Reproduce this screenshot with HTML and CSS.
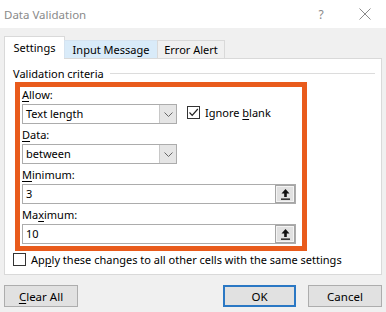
FILE: index.html
```html
<!DOCTYPE html>
<html lang="en">
<head>
  <meta charset="UTF-8" />
  <title>Data Validation</title>
  <link rel="stylesheet" href="styles.css">
</head>
<body>
  <div class="dialog">
    <div class="titlebar">
      <span class="title">Data Validation</span>
      <span class="help">?</span>
      <span class="close">
        <svg width="12" height="12" viewBox="0 0 12 12"><path d="M0.5 0.5 L11.5 11.5 M11.5 0.5 L0.5 11.5" stroke="#8a8a8a" stroke-width="1" fill="none"/></svg>
      </span>
    </div>

    <div class="tabs">
      <div class="tab active">Settings</div>
      <div class="tab hover">Input Message</div>
      <div class="tab error">Error Alert</div>
    </div>

    <div class="panel">
      <div class="group-title"><span>Validation criteria</span><span class="rule"></span></div>

      <div class="highlight">
        <label class="field-label"><u>A</u>llow:</label>
        <div class="row">
          <div class="select">
            <span class="value">Text length</span>
            <span class="drop"><svg width="9" height="5" viewBox="0 0 9 5"><path d="M0.5 0.5 L4.5 4.5 L8.5 0.5" stroke="#666" fill="none"/></svg></span>
          </div>
          <div class="check-row">
            <span class="checkbox checked"><svg width="11" height="11" viewBox="0 0 11 11"><path d="M1.5 5.5 L4.2 8.3 L9.8 2" stroke="#222" stroke-width="1.2" fill="none"/></svg></span>
            <span>Ignore <u>b</u>lank</span>
          </div>
        </div>

        <label class="field-label"><u>D</u>ata:</label>
        <div class="select">
          <span class="value">between</span>
          <span class="drop"><svg width="9" height="5" viewBox="0 0 9 5"><path d="M0.5 0.5 L4.5 4.5 L8.5 0.5" stroke="#666" fill="none"/></svg></span>
        </div>

        <label class="field-label"><u>M</u>inimum:</label>
        <div class="ref-input">
          <span class="value">3</span>
          <span class="ref-btn">
            <svg width="11" height="12" viewBox="0 0 11 12"><path d="M5.5 1 L1.5 5.5 H4.2 V9 H6.8 V5.5 H9.5 Z" fill="#111"/><rect x="1" y="10.5" width="9" height="1.3" fill="#111"/></svg>
          </span>
        </div>

        <label class="field-label">Ma<u>x</u>imum:</label>
        <div class="ref-input">
          <span class="value">10</span>
          <span class="ref-btn">
            <svg width="11" height="12" viewBox="0 0 11 12"><path d="M5.5 1 L1.5 5.5 H4.2 V9 H6.8 V5.5 H9.5 Z" fill="#111"/><rect x="1" y="10.5" width="9" height="1.3" fill="#111"/></svg>
          </span>
        </div>
      </div>

      <div class="check-row apply">
        <span class="checkbox"></span>
        <span>Ap<u>p</u>ly these changes to all other cells with the same settings</span>
      </div>
    </div>

    <div class="buttons">
      <button class="btn"><u>C</u>lear All</button>
      <div class="right">
        <button class="btn default">OK</button>
        <button class="btn">Cancel</button>
      </div>
    </div>
  </div>
</body>
</html>
```

FILE: styles.css
```css
body {
  margin: 0;
  font-family: 'Noto Sans', sans-serif;
  font-size: 11px;
  color: #000;
  background: #f0f0f0;
}

u {
  text-decoration-thickness: 1px;
  text-underline-offset: 2px;
}

.dialog {
  width: 386px;
  height: 312px;
  overflow: hidden;
}

.titlebar {
  height: 28px;
  background: #fff;
  display: flex;
  align-items: center;
  color: #8a8a8a;
}

.title {
  flex: 1;
  padding-left: 4px;
  font-size: 11.5px;
}

.help {
  width: 20px;
  text-align: center;
  margin-right: 28px;
  font-size: 12px;
}

.close {
  width: 14px;
  margin-right: 13px;
  display: flex;
}

.tabs {
  display: flex;
  align-items: flex-end;
  padding: 8px 0 0 4px;
  height: 22px;
  position: relative;
  z-index: 1;
}

.tab {
  height: 18px;
  line-height: 18px;
  text-align: center;
  border: 1px solid #d9d9d9;
  border-bottom: none;
  background: #f0f0f0;
  margin-left: -1px;
  box-sizing: border-box;
}

.tab.active {
  margin-left: 0;
  width: 61px;
  height: 23px;
  line-height: 21px;
  background: #fff;
  margin-bottom: -1px;
}

.tab.hover {
  width: 94px;
  background: #d9ebf9;
  border-color: #d5e3f0;
}

.tab.error {
  width: 68px;
}

.panel {
  margin: 0 4px;
  height: 217px;
  background: #fff;
  border: 1px solid #d9d9d9;
  box-sizing: border-box;
  padding: 6px 0 0 8px;
}

.group-title {
  display: flex;
  align-items: center;
  height: 16px;
  padding-right: 6px;
}

.group-title .rule {
  flex: 1;
  height: 1px;
  background: #dcdcdc;
  margin-left: 6px;
}

.highlight {
  margin: 1px 0 0 2px;
  width: 280px;
  border: 5px solid #e95b1c;
  padding: 0 0 2px 2px;
}

.field-label {
  display: block;
  height: 16px;
  line-height: 16px;
  margin-bottom: 1px;
}

.row {
  display: flex;
  align-items: center;
}

.select {
  width: 155px;
  height: 20px;
  box-sizing: border-box;
  border: 1px solid #acacac;
  display: flex;
  margin-bottom: 3px;
  background: #fff;
}

.value {
  flex: 1;
  padding-left: 3px;
  line-height: 18px;
}

.drop {
  width: 16px;
  background: #e5e5e5;
  border-left: 1px solid #c8c8c8;
  display: flex;
  align-items: center;
  justify-content: center;
}

.check-row {
  display: flex;
  align-items: center;
  gap: 5px;
}

.row .check-row {
  margin: 0 0 7px 10px;
}

.checkbox {
  width: 11px;
  height: 11px;
  border: 1px solid #333;
  background: #fff;
  display: flex;
  align-items: center;
  justify-content: center;
}

.ref-input {
  width: 274px;
  height: 20px;
  box-sizing: border-box;
  border: 1px solid #acacac;
  display: flex;
  margin-bottom: 3px;
}

.highlight .ref-input:last-child {
  margin-bottom: 0;
}

.ref-btn {
  width: 20px;
  background: #e1e1e1;
  border: 1px solid #a5a5a5;
  box-shadow: inset 0 0 0 1px #f4f4f4;
  box-sizing: border-box;
  display: flex;
  align-items: center;
  justify-content: center;
}

.apply {
  margin: 1px 0 0 0;
  height: 14px;
}

.buttons {
  display: flex;
  justify-content: space-between;
  padding: 10px 4px 0 4px;
}

.right {
  display: flex;
  gap: 12px;
}

.btn {
  font-family: inherit;
  font-size: 11.5px;
  height: 22px;
  width: 74px;
  background: #e1e1e1;
  border: 1px solid #adadad;
  padding: 0;
  color: #000;
}

.btn.default {
  border: 2px solid #2b78c4;
  width: 73px;
}
```
